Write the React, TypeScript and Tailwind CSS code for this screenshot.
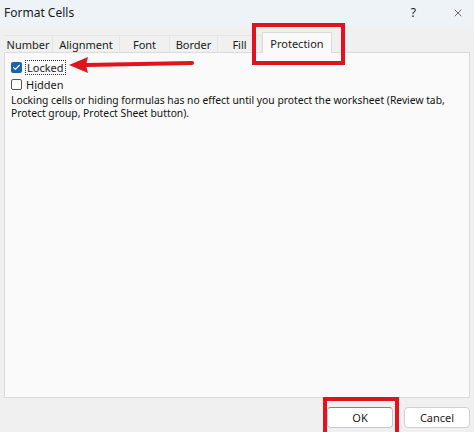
import { Check, X } from "lucide-react";

const tabs = [
  { label: "Number", w: "w-[49px]" },
  { label: "Alignment", w: "w-[67px]" },
  { label: "Font", w: "w-[50px]" },
  { label: "Border", w: "w-[48px]" },
  { label: "Fill", w: "w-[44px]" },
];

export default function App() {
  return (
    <div className="relative flex h-[432px] w-[474px] flex-col overflow-hidden bg-[#f0f0f0] font-['Noto_Sans','Open_Sans',sans-serif] text-[#1a1a1a]">
      {/* Title bar */}
      <div className="flex h-[26px] shrink-0 items-center bg-[#eef3f8] pl-[4px] pr-[10px]">
        <span className="text-[12px] leading-none">Format Cells</span>
        <span className="ml-auto mr-[36px] text-[12px] leading-none">?</span>
        <X size={12} strokeWidth={1.4} className="text-[#333]" />
      </div>

      {/* Tabs */}
      <div className="flex h-[26px] shrink-0 items-end pl-[4px]">
        {tabs.map((t) => (
          <div
            key={t.label}
            className={`${t.w} flex h-[17px] items-center justify-center border-r border-t border-[#e6e6e6] text-[11px] leading-none`}
          >
            {t.label}
          </div>
        ))}
        <div className="relative z-10 mb-[-1px] flex h-[21px] w-[70px] items-center justify-center border-x border-t border-[#dcdcdc] bg-[#fafafa] text-[11px] leading-none">
          Protection
        </div>
      </div>

      {/* Panel */}
      <div className="mx-[4px] h-[346px] shrink-0 border border-[#dcdcdc] bg-[#fafafa] px-[6px] pt-[7px]">
        <div className="flex items-center gap-[3px]">
          <span className="flex h-[11px] w-[11px] items-center justify-center rounded-[2px] bg-[#1a62b8]">
            <Check size={9} strokeWidth={3} className="text-white" />
          </span>
          <span className="border border-dotted border-[#333] px-[1px] text-[11px] leading-[13px]">
            Locked
          </span>
        </div>
        <div className="mt-[3px] flex items-center gap-[4px]">
          <span className="h-[11px] w-[11px] rounded-[2px] border border-[#555] bg-white" />
          <span className="text-[11px] leading-[13px]">
            H<span className="underline">i</span>dden
          </span>
        </div>
        <p className="mt-[3px] text-[10.3px] leading-[13px] text-[#111]">
          Locking cells or hiding formulas has no effect until you protect the worksheet (Review tab,
          <br />
          Protect group, Protect Sheet button).
        </p>
      </div>

      {/* Footer */}
      <div className="flex flex-1 items-start justify-end gap-[11px] pr-[4px] pt-[9px]">
        <button className="h-[21px] w-[66px] rounded-[4px] border border-[#c4c8cc] border-t-[#6f8a95] bg-white text-[11px] leading-none">
          OK
        </button>
        <button className="h-[21px] w-[66px] rounded-[4px] border border-[#d0d0d0] bg-white text-[11px] leading-none">
          Cancel
        </button>
      </div>

      {/* Annotations */}
      <div className="absolute left-[252px] top-[23px] h-[42px] w-[93px] border-[4px] border-[#e0141e]" />
      <div className="absolute left-[323px] top-[397px] h-[40px] w-[76px] border-[4px] border-[#e0141e]" />
      <svg className="absolute left-[66px] top-[55px]" width="130" height="20" viewBox="0 0 130 20">
        <path d="M20 10 L126 8" stroke="#e0141e" strokeWidth="4" strokeLinecap="round" />
        <path d="M3 10 L22 2 L20 10 L22 18 Z" fill="#e0141e" />
      </svg>
    </div>
  );
}
